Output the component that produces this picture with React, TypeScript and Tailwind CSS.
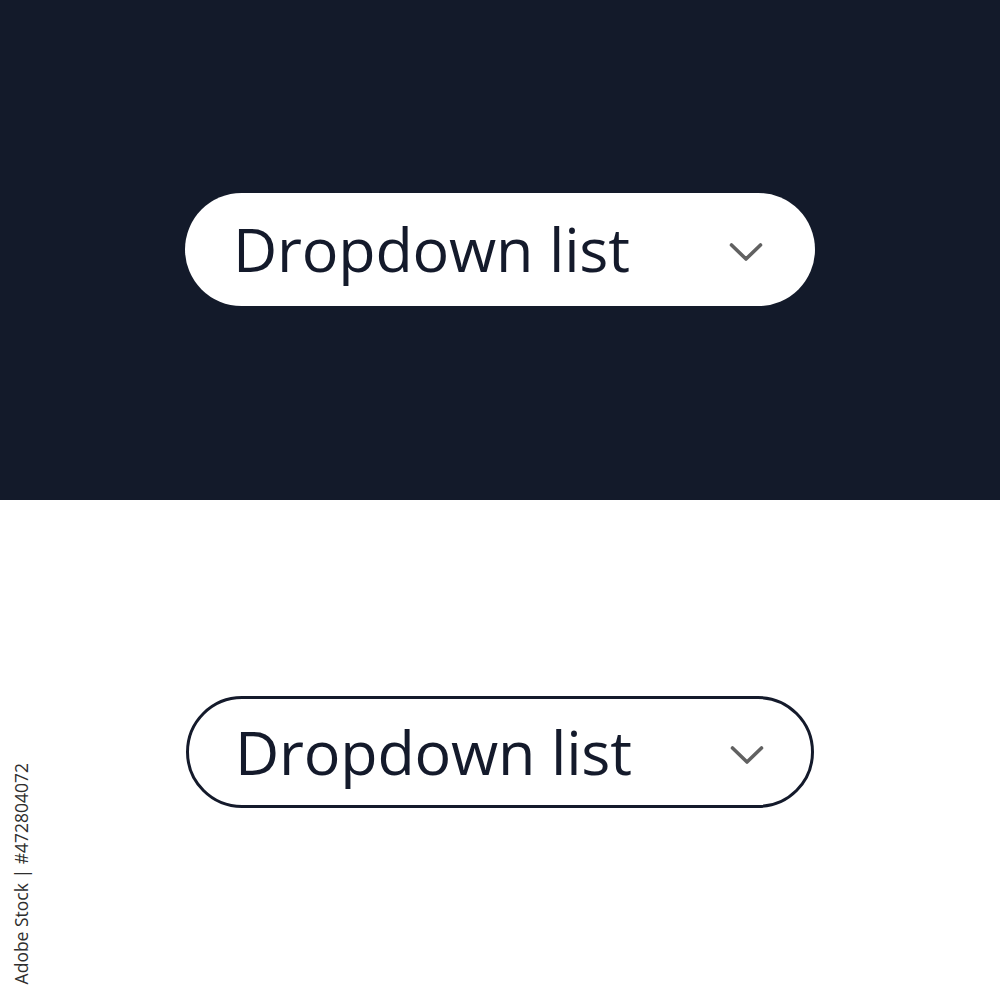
type Variant = "filled" | "outlined";

function Chevron() {
  return (
    <svg width="34" height="20" viewBox="0 0 34 20" fill="none" className="shrink-0">
      <polyline
        points="2.5,3 17,17 31.5,3"
        stroke="#616161"
        strokeWidth="3.6"
        strokeLinecap="round"
        strokeLinejoin="round"
      />
    </svg>
  );
}

function Dropdown({ variant }: { variant: Variant }) {
  const box =
    variant === "filled"
      ? "w-[630px] h-[113px] bg-white pl-[48px] pr-[52px]"
      : "w-[628px] h-[112px] bg-white border-[3px] border-[#141a2b] pl-[46px] pr-[47px]";

  return (
    <button
      type="button"
      className={`${box} flex items-center justify-between rounded-full font-['Open_Sans',sans-serif]`}
    >
      <span className="text-[61px] leading-none tracking-[-0.2px] text-[#141a2b] pb-[2px]">
        Dropdown list
      </span>
      <span className="pt-[5px]">
        <Chevron />
      </span>
    </button>
  );
}

export default function App() {
  return (
    <div className="flex h-[1000px] w-[1000px] flex-col">
      {/* dark variant */}
      <section className="h-[500px] bg-[#131a2a] pl-[185px] pt-[193px]">
        <Dropdown variant="filled" />
      </section>

      {/* light variant */}
      <section className="flex h-[500px] bg-white">
        <div className="flex w-[186px] shrink-0 items-end pb-[16px] pl-[11px]">
          <span className="rotate-180 whitespace-nowrap text-[17.5px] leading-[20px] font-medium text-[#2e2e2e] [writing-mode:vertical-rl] font-['Open_Sans',sans-serif]">
            Adobe Stock | #472804072
          </span>
        </div>
        <div className="pt-[196px]">
          <Dropdown variant="outlined" />
        </div>
      </section>
    </div>
  );
}
